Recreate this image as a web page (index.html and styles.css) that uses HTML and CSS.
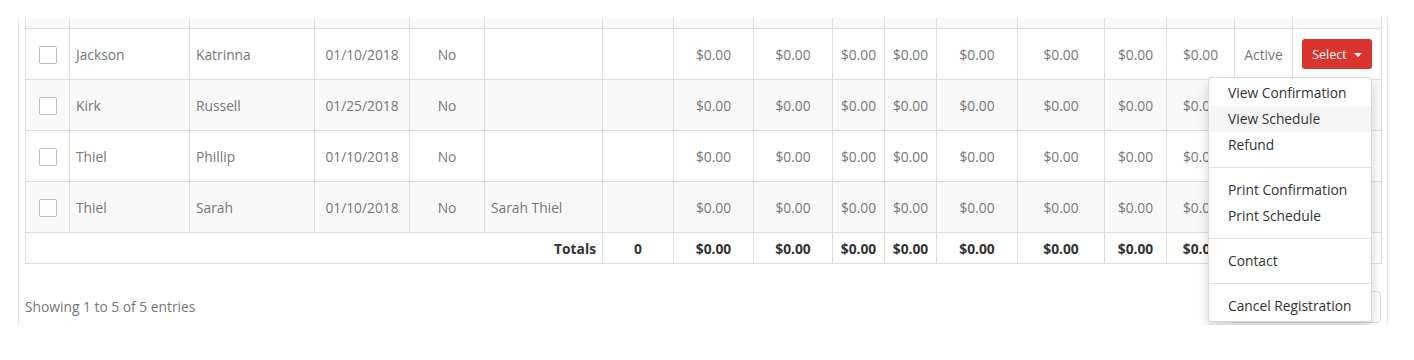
FILE: index.html
```html
<!DOCTYPE html>
<html lang="en">
<head>
    <meta charset="UTF-8">
    <title>Registrations</title>
    <link rel="stylesheet" href="styles.css">
</head>
<body>
    <div class="panel">
        <table class="reg-table">
            <colgroup>
                <col style="width:44px"><col style="width:120px"><col style="width:125px"><col style="width:95px">
                <col style="width:75px"><col style="width:118px"><col style="width:71px"><col style="width:80px">
                <col style="width:79px"><col style="width:52px"><col style="width:52px"><col style="width:81px">
                <col style="width:87px"><col style="width:62px"><col style="width:68px"><col style="width:58px">
                <col style="width:89px">
            </colgroup>
            <tbody>
                <!-- previous row, scrolled out of view -->
                <tr class="odd">
                    <td></td><td></td><td></td><td></td><td></td><td></td><td></td><td></td><td></td>
                    <td></td><td></td><td></td><td></td><td></td><td></td><td></td><td></td>
                </tr>
                <tr>
                    <td class="chk"><span class="box"></span></td>
                    <td>Jackson</td><td>Katrinna</td><td class="c">01/10/2018</td><td class="c">No</td><td></td><td></td>
                    <td class="c">$0.00</td><td class="c">$0.00</td><td class="c">$0.00</td><td class="c">$0.00</td>
                    <td class="c">$0.00</td><td class="c">$0.00</td><td class="c">$0.00</td><td class="c">$0.00</td>
                    <td class="c">Active</td>
                    <td class="c">
                        <div class="dropdown">
                            <button class="btn-select">Select <span class="caret"></span></button>
                            <ul class="dropdown-menu">
                                <li><a>View Confirmation</a></li>
                                <li class="hover"><a>View Schedule</a></li>
                                <li><a>Refund</a></li>
                                <li class="divider"></li>
                                <li><a>Print Confirmation</a></li>
                                <li><a>Print Schedule</a></li>
                                <li class="divider"></li>
                                <li><a>Contact</a></li>
                                <li class="divider"></li>
                                <li><a>Cancel Registration</a></li>
                            </ul>
                        </div>
                    </td>
                </tr>
                <tr class="odd">
                    <td class="chk"><span class="box"></span></td>
                    <td>Kirk</td><td>Russell</td><td class="c">01/25/2018</td><td class="c">No</td><td></td><td></td>
                    <td class="c">$0.00</td><td class="c">$0.00</td><td class="c">$0.00</td><td class="c">$0.00</td>
                    <td class="c">$0.00</td><td class="c">$0.00</td><td class="c">$0.00</td><td class="c">$0.00</td>
                    <td class="c">Active</td>
                    <td class="c"><button class="btn-select">Select <span class="caret"></span></button></td>
                </tr>
                <tr>
                    <td class="chk"><span class="box"></span></td>
                    <td>Thiel</td><td>Phillip</td><td class="c">01/10/2018</td><td class="c">No</td><td></td><td></td>
                    <td class="c">$0.00</td><td class="c">$0.00</td><td class="c">$0.00</td><td class="c">$0.00</td>
                    <td class="c">$0.00</td><td class="c">$0.00</td><td class="c">$0.00</td><td class="c">$0.00</td>
                    <td class="c">Active</td>
                    <td class="c"><button class="btn-select">Select <span class="caret"></span></button></td>
                </tr>
                <tr class="odd">
                    <td class="chk"><span class="box"></span></td>
                    <td>Thiel</td><td>Sarah</td><td class="c">01/10/2018</td><td class="c">No</td><td>Sarah Thiel</td><td></td>
                    <td class="c">$0.00</td><td class="c">$0.00</td><td class="c">$0.00</td><td class="c">$0.00</td>
                    <td class="c">$0.00</td><td class="c">$0.00</td><td class="c">$0.00</td><td class="c">$0.00</td>
                    <td class="c">Active</td>
                    <td class="c"><button class="btn-select">Select <span class="caret"></span></button></td>
                </tr>
            </tbody>
            <tfoot>
                <tr>
                    <th colspan="6" class="r">Totals</th>
                    <th>0</th>
                    <th>$0.00</th><th>$0.00</th><th>$0.00</th><th>$0.00</th>
                    <th>$0.00</th><th>$0.00</th><th>$0.00</th><th>$0.00</th>
                    <th></th><th></th>
                </tr>
            </tfoot>
        </table>

        <div class="table-footer">
            <div class="info">Showing 1 to 5 of 5 entries</div>
            <ul class="pagination">
                <li>Previous</li>
                <li class="current">1</li>
                <li>Next</li>
            </ul>
        </div>
    </div>
</body>
</html>
```

FILE: styles.css
```css
body {
    margin: 0;
    background: #fff;
    font-family: "Open Sans", Arial, sans-serif;
    font-size: 13.8px;
    color: #777;
}

.panel {
    margin: 18px 0 0 18px;
    width: 1356px;
    height: 307px;
    padding: 0 6px;
    border-left: 1px solid #e4e4e4;
    border-right: 1px solid #e4e4e4;
    overflow: hidden;
}

.reg-table {
    width: 1356px;
    table-layout: fixed;
    border-collapse: collapse;
    margin-top: -41px;
    border: 1px solid #ddd;
}

.reg-table td,
.reg-table th {
    border: 1px solid #ddd;
    padding: 0 6px;
    white-space: nowrap;
    overflow: visible;
}

.reg-table tbody td {
    height: 50px;
}

.reg-table tbody tr.odd td {
    background: #f9f9f9;
}

.reg-table .c {
    text-align: center;
}

.reg-table tfoot th {
    height: 30px;
    color: #333;
    font-weight: bold;
    text-align: center;
}

.reg-table tfoot th.r {
    text-align: right;
}

.chk {
    text-align: center;
}

.box {
    display: inline-block;
    width: 16px;
    height: 16px;
    border: 1px solid #bdbdbd;
    border-radius: 2px;
    background: #fff;
    vertical-align: middle;
}

.btn-select {
    background: #d9342d;
    color: #fff;
    border: none;
    border-radius: 3px;
    width: 70px;
    height: 30px;
    font-family: "Open Sans", Arial, sans-serif;
    font-size: 12.5px;
    padding: 0;
    cursor: pointer;
}

.caret {
    display: inline-block;
    width: 0;
    height: 0;
    margin-left: 4px;
    vertical-align: middle;
    border-top: 4px solid #fff;
    border-left: 4px solid transparent;
    border-right: 4px solid transparent;
}

/* Open dropdown on the first row */
.dropdown {
    position: relative;
    display: inline-block;
}

.dropdown-menu {
    position: absolute;
    top: 38px;
    right: 0;
    width: 162px;
    margin: 0;
    padding: 2px 0;
    list-style: none;
    background: #fff;
    border: 1px solid rgba(0, 0, 0, 0.15);
    border-radius: 4px;
    box-shadow: 0 6px 12px rgba(0, 0, 0, 0.175);
    text-align: left;
    z-index: 10;
}

.dropdown-menu li a {
    display: block;
    padding: 3px 19px;
    line-height: 20px;
    color: #333;
    font-size: 13.8px;
}

.dropdown-menu li.hover a {
    background: #f5f5f5;
}

.dropdown-menu .divider {
    height: 1px;
    margin: 9px 0;
    background: #e5e5e5;
}

.table-footer {
    display: flex;
    justify-content: space-between;
    align-items: center;
    margin-top: 27px;
}

.info {
    line-height: 20px;
}

.pagination {
    display: flex;
    margin: 0;
    padding: 0;
    list-style: none;
}

.pagination li {
    padding: 0 9px;
    line-height: 30px;
    border: 1px solid #ddd;
    margin-left: -1px;
    color: #777;
}

.pagination li:first-child {
    border-radius: 4px 0 0 4px;
}

.pagination li:last-child {
    border-radius: 0 4px 4px 0;
}
```
